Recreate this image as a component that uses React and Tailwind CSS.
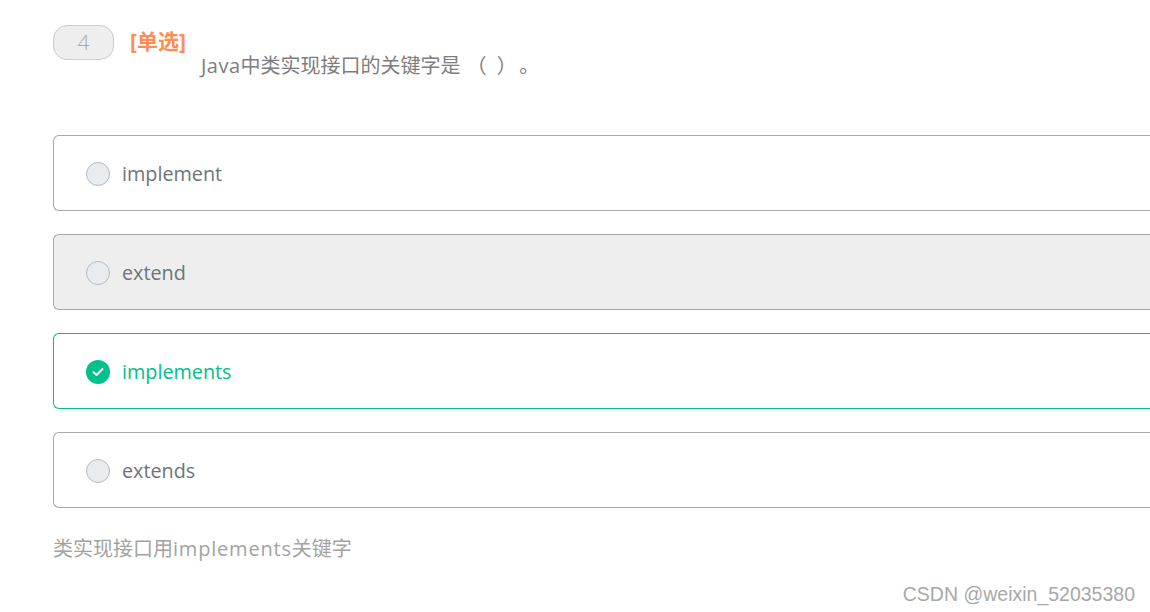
const options = [
  { label: "implement", state: "normal" },
  { label: "extend", state: "hover" },
  { label: "implements", state: "checked" },
  { label: "extends", state: "normal" },
];

const Option = ({ label, state }) => {
  const box =
    state === "checked"
      ? "border-[#00c08b] bg-white text-[#00c08b]"
      : state === "hover"
        ? "border-[#a8a8a8] bg-[#eeeeee] text-[#6c757d]"
        : "border-[#a8a8a8] bg-white text-[#6c757d]";

  return (
    <div className={`flex h-[76px] items-center rounded-l-[6px] border border-r-0 pl-[32px] ${box}`}>
      {state === "checked" ? (
        <span className="mt-0.5 flex h-6 w-6 items-center justify-center rounded-full bg-[#00c08b]">
          <svg width="12" height="10" viewBox="0 0 12 10" fill="none">
            <path d="M1.5 5.2 4.6 8 10.5 2" stroke="white" strokeWidth="2" strokeLinecap="round" strokeLinejoin="round" />
          </svg>
        </span>
      ) : (
        <span className="mt-0.5 h-6 w-6 rounded-full border border-[#b4bac4] bg-[#e9ecef]" />
      )}
      <span className="ml-3 mt-0.5 text-[19.8px] leading-none">{label}</span>
    </div>
  );
};

export default function App() {
  return (
    <div className="relative h-[612px] w-[1150px] overflow-hidden bg-white pl-[53px] pt-[25px] font-['Open_Sans','Noto_Sans_CJK_SC',sans-serif]">
      {/* Question heading */}
      <div className="flex">
        <div className="flex h-[35px] w-[61px] items-center justify-center rounded-[14px] border border-[#cccccc] bg-[#eeeeee] text-[21px] font-light text-[#a8a5b0]">
          4
        </div>
        <div className="ml-[16px] mt-[2px] text-[21px] font-bold leading-7 text-[#ff8c50]">[单选]</div>
        <div className="ml-[15px] mt-[27px] text-[20px] leading-7 text-[#7d7d7d] [text-spacing-trim:space-all]">
          <span className="tracking-[0.5px]">Java</span>中类实现接口的关键字是<span className="ml-[6px] tracking-[2.5px]">（ ）</span>。
        </div>
      </div>

      {/* Answers */}
      <div className="mt-[55px] flex flex-col gap-[23px]">
        {options.map((o) => (
          <Option key={o.label} label={o.label} state={o.state} />
        ))}
      </div>

      <p className="mt-[27px] text-[20px] leading-7 text-[#a3a3a3]">
        类实现接口用<span className="tracking-[0.8px]">implements</span>关键字
      </p>

      <span className="absolute bottom-[6px] right-[15px] font-['Liberation_Sans',sans-serif] text-[19.5px] leading-6 text-[#a8a8a8]">
        CSDN @weixin_52035380
      </span>
    </div>
  );
}
